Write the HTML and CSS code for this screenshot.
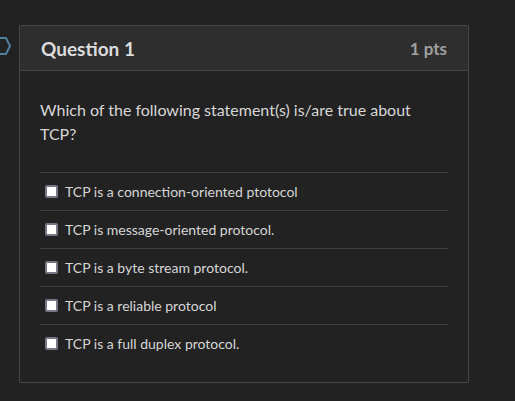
FILE: index.html
```html
<!DOCTYPE html>
<html lang="en">
<head>
    <meta charset="UTF-8">
    <title>Quiz - Question 1</title>
    <link rel="stylesheet" href="styles.css">
</head>
<body>
    <svg class="flag" width="12" height="20" viewBox="0 0 12 20">
        <path d="M-6 2 H6 L10 10 L6 18 H-6" fill="none" stroke="#4f7f9f" stroke-width="2"/>
    </svg>

    <div class="question">
        <div class="question-header">
            <h2>Question 1</h2>
            <span class="points">1 pts</span>
        </div>
        <div class="question-body">
            <p class="question-text">Which of the following statement(s) is/are true about TCP?</p>
            <div class="answers">
                <label class="answer"><span class="box"></span>TCP is a connection-oriented ptotocol</label>
                <label class="answer"><span class="box"></span>TCP is message-oriented protocol.</label>
                <label class="answer"><span class="box"></span>TCP is a byte stream protocol.</label>
                <label class="answer"><span class="box"></span>TCP is a reliable protocol</label>
                <label class="answer"><span class="box"></span>TCP is a full duplex protocol.</label>
            </div>
        </div>
    </div>
</body>
</html>
```

FILE: styles.css
```css
* { margin: 0; padding: 0; box-sizing: border-box; }
body {
    font-family: Lato, "Open Sans", sans-serif;
    background: #222222;
    color: #d8d8d8;
    padding: 25px 0 0 19px;
    position: relative;
}
.flag { position: absolute; left: 0; top: 36px; }
.question {
    width: 450px; border: 1px solid #454545; background: #222222;
}
.question-header {
    display: flex; justify-content: space-between; align-items: center;
    height: 45px; padding: 0 21px; background: #2e2e2e; border-bottom: 1px solid #444;
}
.question-header h2 { font-size: 19px; font-weight: bold; color: #dcdcdc; }
.points { font-size: 17px; font-weight: bold; color: #a0a0a0; }
.question-body { padding: 27px 20px 20px 20px; }
.question-text { font-size: 16px; line-height: 24px; color: #d6d6d6; margin-bottom: 26px; padding-right: 20px; }
.answer {
    display: flex; align-items: center; gap: 7px;
    height: 38px; padding-left: 5px; border-top: 1px solid #404040;
    font-size: 14px; color: #d6d6d6;
}
.box {
    width: 13px; height: 13px; background: #fff; border: 2px solid #777785; border-radius: 2px;
}
```
